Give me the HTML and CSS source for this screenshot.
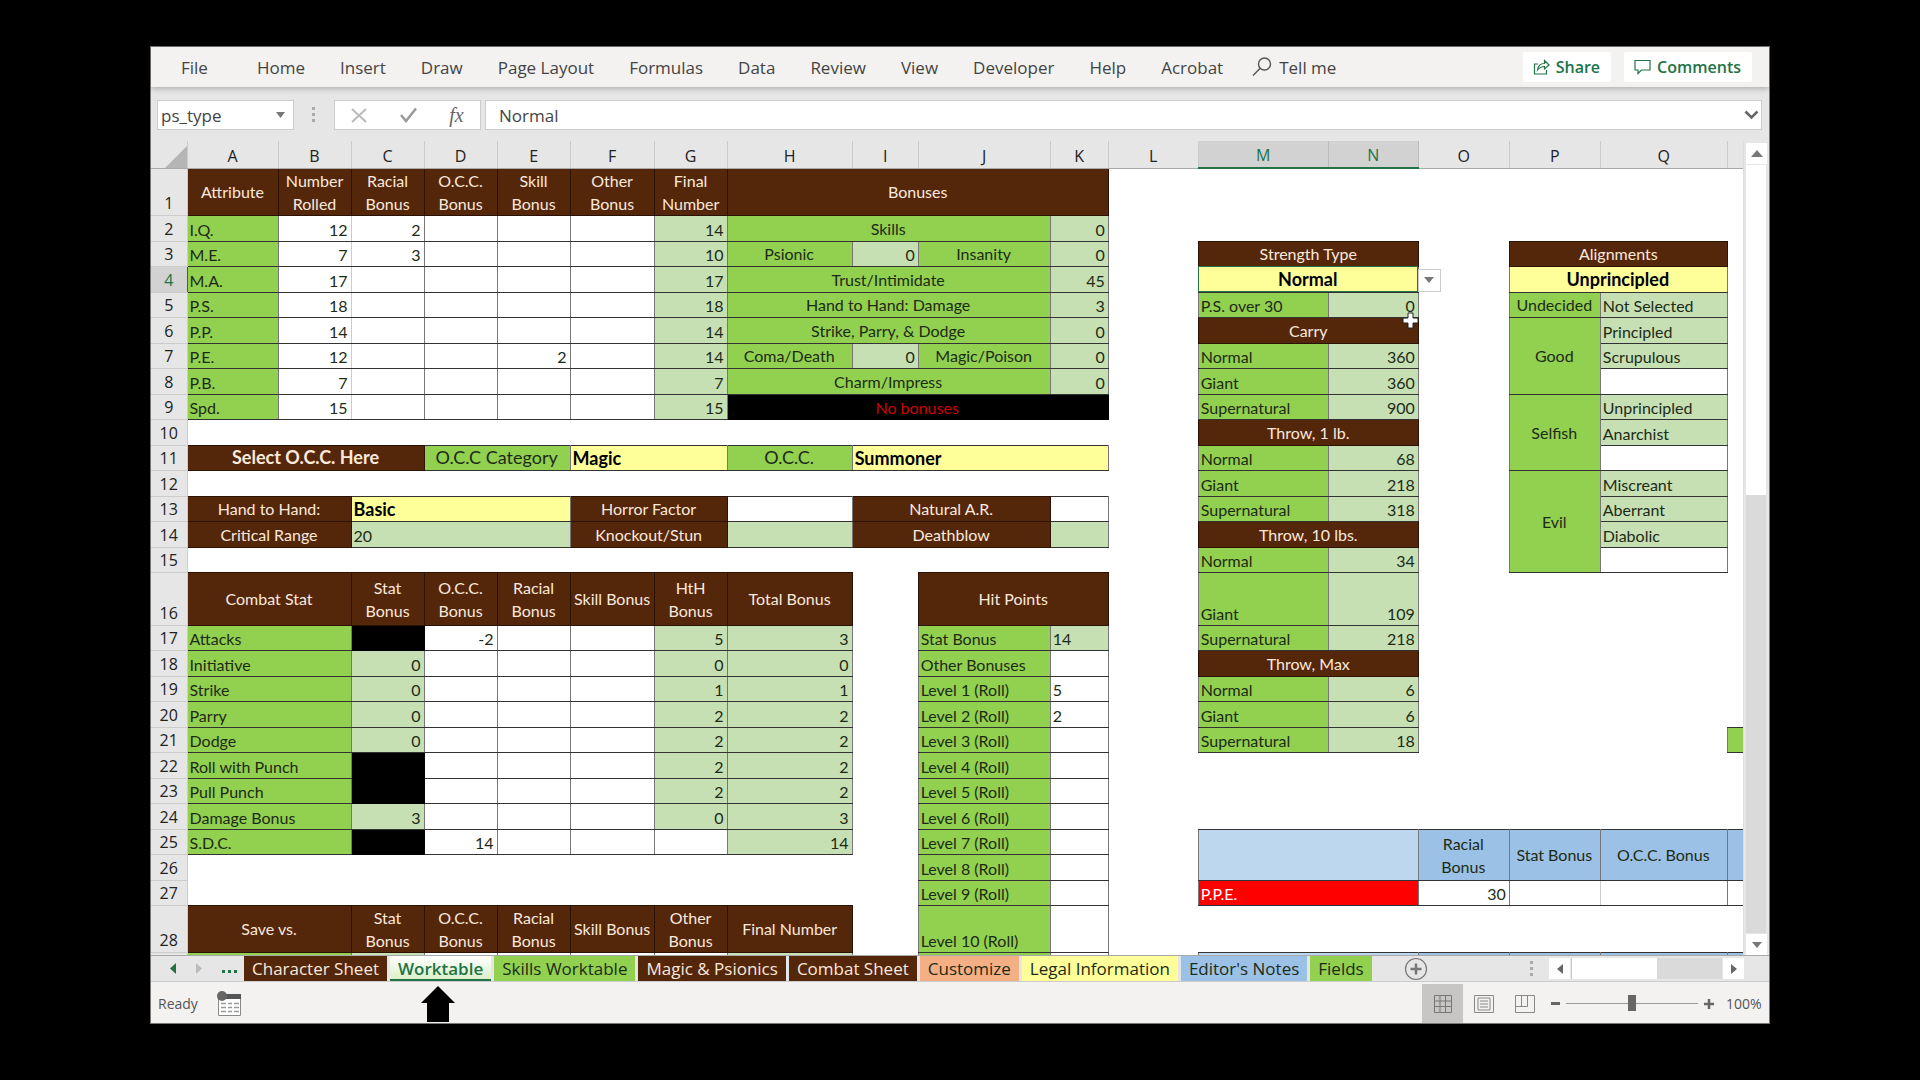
FILE: index.html
```html
<!DOCTYPE html>
<html lang="en">
<head>
    <meta charset="UTF-8">
    <meta name="viewport" content="width=device-width, initial-scale=1.0">
    <title>Worktable</title>
    <link rel="stylesheet" href="styles.css">
</head>
<body>
    <div class="window">
        <!-- Ribbon -->
        <nav class="ribbon">
            <button class="file-tab">File</button>
            <button>Home</button>
            <button>Insert</button>
            <button>Draw</button>
            <button>Page Layout</button>
            <button>Formulas</button>
            <button>Data</button>
            <button>Review</button>
            <button>View</button>
            <button>Developer</button>
            <button>Help</button>
            <button>Acrobat</button>
            <button class="tell-me">
                <svg width="20" height="20" viewBox="0 0 20 20" fill="none" stroke="#555" stroke-width="1.4"><circle cx="12.5" cy="7" r="6"/><path d="M8.2 11.3L1 18.5"/></svg>
                Tell me
            </button>
            <div class="ribbon-right">
                <button class="action">
                    <svg width="17" height="16" viewBox="0 0 17 16" fill="none" stroke="#217346" stroke-width="1.2"><path d="M5 5H1.5v10h12v-4M4.500 11c.5-4 3-6.500 7-6.500V1.500L16 6l-4.500 4V7.500c-3 0-5 1-7 3.500z"/></svg>
                    Share
                </button>
                <button class="action">
                    <svg width="17" height="16" viewBox="0 0 17 16" fill="none" stroke="#217346" stroke-width="1.2"><path d="M1 1.500h15v9.500H7.500L4 14.500V11H1z"/></svg>
                    Comments
                </button>
            </div>
        </nav>

        <!-- Formula bar -->
        <div class="formula-bar">
            <div class="name-box">
                <input type="text" value="ps_type" aria-label="Name box">
                <button aria-label="Show names"><svg width="9" height="6" viewBox="0 0 9 6"><path d="M0 0h9L4.500 6z" fill="#777"/></svg></button>
            </div>
            <svg class="grip" width="4" height="16" viewBox="0 0 4 16" fill="#aaa"><path d="M0 0h3v3H0zM0 6h3v3H0zM0 12h3v3H0z"/></svg>
            <div class="formula-buttons">
                <button aria-label="Cancel"><svg width="16" height="16" viewBox="0 0 16 16" stroke="#bbb" stroke-width="2"><path d="M1 2l14 13M15 2L1 15"/></svg></button>
                <button aria-label="Enter"><svg width="17" height="16" viewBox="0 0 17 16" fill="none" stroke="#999" stroke-width="2.500"><path d="M1 8l5 6L16 1.500"/></svg></button>
                <button class="fx" aria-label="Insert function">fx</button>
            </div>
            <div class="formula-input">
                <input type="text" value="Normal" aria-label="Formula">
                <button aria-label="Expand formula bar"><svg width="15" height="10" viewBox="0 0 15 10" fill="none" stroke="#666" stroke-width="2.500"><path d="M1.500 1.500l6 6 6-6"/></svg></button>
            </div>
        </div>

        <!-- Grid -->
        <div class="sheet-area">
            <div class="sheet-view">
                <table class="sheet">
                    <colgroup>
                        <col class="w-head"><col class="w-a"><col class="w-b"><col class="w-b"><col class="w-b"><col class="w-b">
                        <col class="w-f"><col class="w-b"><col class="w-h"><col class="w-i"><col class="w-j"><col class="w-k">
                        <col class="w-n"><col class="w-m"><col class="w-n"><col class="w-a"><col class="w-a"><col class="w-q"><col class="w-a">
                    </colgroup>
                    <thead>
                        <tr>
                            <th class="corner"><svg width="22" height="22" viewBox="0 0 22 22"><path d="M22 0v22H0z" fill="#b5b5b5"/></svg></th>
                            <th>A</th><th>B</th><th>C</th><th>D</th><th>E</th><th>F</th><th>G</th><th>H</th><th>I</th><th>J</th><th>K</th><th>L</th>
                            <th class="selected">M</th><th class="selected">N</th><th>O</th><th>P</th><th>Q</th><th></th>
                        </tr>
                    </thead>
                    <tbody>
                        <tr class="tall">
                            <th>1</th>
                            <td class="brown">Attribute</td><td class="brown">Number<br>Rolled</td><td class="brown">Racial<br>Bonus</td><td class="brown">O.C.C.<br>Bonus</td><td class="brown">Skill<br>Bonus</td><td class="brown">Other<br>Bonus</td><td class="brown">Final<br>Number</td>
                            <td class="brown" colspan="4">Bonuses</td>
                            <td colspan="7"></td>
                        </tr>
                        <tr>
                            <th>2</th>
                            <td class="green">I.Q.</td><td class="cell num soft">12</td><td class="cell num">2</td><td class="cell"></td><td class="cell"></td><td class="cell"></td><td class="light num">14</td>
                            <td class="green mid" colspan="3">Skills</td><td class="light num">0</td>
                            <td colspan="7"></td>
                        </tr>
                        <tr>
                            <th>3</th>
                            <td class="green">M.E.</td><td class="cell num soft">7</td><td class="cell num">3</td><td class="cell"></td><td class="cell"></td><td class="cell"></td><td class="light num">10</td>
                            <td class="green mid">Psionic</td><td class="light num">0</td><td class="green mid">Insanity</td><td class="light num">0</td>
                            <td></td>
                            <td class="brown" colspan="2">Strength Type</td>
                            <td></td>
                            <td class="brown" colspan="2">Alignments</td>
                            <td></td>
                        </tr>
                        <tr>
                            <th class="selected">4</th>
                            <td class="green">M.A.</td><td class="cell num soft">17</td><td class="cell"></td><td class="cell"></td><td class="cell"></td><td class="cell"></td><td class="light num">17</td>
                            <td class="green mid" colspan="3">Trust/Intimidate</td><td class="light num">45</td>
                            <td></td>
                            <td class="yellow mid active" colspan="2">Normal
                                <button class="cell-drop" aria-label="Choose strength type"><svg width="10" height="6" viewBox="0 0 10 6"><path d="M0 0h10L5 6z" fill="#777"/></svg></button>
                            </td>
                            <td></td>
                            <td class="yellow mid" colspan="2">Unprincipled</td>
                            <td></td>
                        </tr>
                        <tr>
                            <th>5</th>
                            <td class="green">P.S.</td><td class="cell num soft">18</td><td class="cell"></td><td class="cell"></td><td class="cell"></td><td class="cell"></td><td class="light num">18</td>
                            <td class="green mid" colspan="3">Hand to Hand: Damage</td><td class="light num">3</td>
                            <td></td>
                            <td class="green">P.S. over 30</td>
                            <td class="light num has-cursor">0
                                <svg class="cursor" width="17" height="17" viewBox="0 0 17 17" fill="#fff" stroke="#222"><path d="M6 1h5v5h5v5h-5v5H6v-5H1V6h5z"/></svg>
                            </td>
                            <td></td>
                            <td class="green mid">Undecided</td><td class="light">Not Selected</td>
                            <td></td>
                        </tr>
                        <tr>
                            <th>6</th>
                            <td class="green">P.P.</td><td class="cell num soft">14</td><td class="cell"></td><td class="cell"></td><td class="cell"></td><td class="cell"></td><td class="light num">14</td>
                            <td class="green mid" colspan="3">Strike, Parry, &amp; Dodge</td><td class="light num">0</td>
                            <td></td>
                            <td class="brown" colspan="2">Carry</td>
                            <td></td>
                            <td class="green mid" rowspan="3">Good</td><td class="light">Principled</td>
                            <td></td>
                        </tr>
                        <tr>
                            <th>7</th>
                            <td class="green">P.E.</td><td class="cell num soft">12</td><td class="cell"></td><td class="cell"></td><td class="cell num">2</td><td class="cell"></td><td class="light num">14</td>
                            <td class="green mid">Coma/Death</td><td class="light num">0</td><td class="green mid">Magic/Poison</td><td class="light num">0</td>
                            <td></td>
                            <td class="green">Normal</td><td class="light num">360</td>
                            <td></td>
                            <td class="light">Scrupulous</td>
                            <td></td>
                        </tr>
                        <tr>
                            <th>8</th>
                            <td class="green">P.B.</td><td class="cell num soft">7</td><td class="cell"></td><td class="cell"></td><td class="cell"></td><td class="cell"></td><td class="light num">7</td>
                            <td class="green mid" colspan="3">Charm/Impress</td><td class="light num">0</td>
                            <td></td>
                            <td class="green">Giant</td><td class="light num">360</td>
                            <td></td>
                            <td class="cell"></td>
                            <td></td>
                        </tr>
                        <tr>
                            <th>9</th>
                            <td class="green">Spd.</td><td class="cell num soft">15</td><td class="cell"></td><td class="cell"></td><td class="cell"></td><td class="cell"></td><td class="light num">15</td>
                            <td class="black warning" colspan="4">No bonuses</td>
                            <td></td>
                            <td class="green">Supernatural</td><td class="light num">900</td>
                            <td></td>
                            <td class="green mid" rowspan="3">Selfish</td><td class="light">Unprincipled</td>
                            <td></td>
                        </tr>
                        <tr>
                            <th>10</th>
                            <td colspan="12"></td>
                            <td class="brown" colspan="2">Throw, 1 lb.</td>
                            <td></td>
                            <td class="light">Anarchist</td>
                            <td></td>
                        </tr>
                        <tr>
                            <th>11</th>
                            <td class="brown big" colspan="3"><b>Select O.C.C. Here</b></td>
                            <td class="green mid big" colspan="2">O.C.C Category</td>
                            <td class="yellow" colspan="2">Magic</td>
                            <td class="green mid big">O.C.C.</td>
                            <td class="yellow" colspan="3">Summoner</td>
                            <td></td>
                            <td class="green">Normal</td><td class="light num">68</td>
                            <td></td>
                            <td class="cell"></td>
                            <td></td>
                        </tr>
                        <tr>
                            <th>12</th>
                            <td colspan="12"></td>
                            <td class="green">Giant</td><td class="light num">218</td>
                            <td></td>
                            <td class="green mid" rowspan="4">Evil</td><td class="light">Miscreant</td>
                            <td></td>
                        </tr>
                        <tr>
                            <th>13</th>
                            <td class="brown" colspan="2">Hand to Hand:</td>
                            <td class="yellow" colspan="3">Basic</td>
                            <td class="brown" colspan="2">Horror Factor</td>
                            <td class="cell"></td>
                            <td class="brown" colspan="2">Natural A.R.</td>
                            <td class="cell"></td>
                            <td></td>
                            <td class="green">Supernatural</td><td class="light num">318</td>
                            <td></td>
                            <td class="light">Aberrant</td>
                            <td></td>
                        </tr>
                        <tr>
                            <th>14</th>
                            <td class="brown" colspan="2">Critical Range</td>
                            <td class="light" colspan="3">20</td>
                            <td class="brown" colspan="2">Knockout/Stun</td>
                            <td class="light"></td>
                            <td class="brown" colspan="2">Deathblow</td>
                            <td class="light"></td>
                            <td></td>
                            <td class="brown" colspan="2">Throw, 10 lbs.</td>
                            <td></td>
                            <td class="light">Diabolic</td>
                            <td></td>
                        </tr>
                        <tr>
                            <th>15</th>
                            <td colspan="12"></td>
                            <td class="green">Normal</td><td class="light num">34</td>
                            <td></td>
                            <td class="cell"></td>
                            <td></td>
                        </tr>
                        <tr class="taller">
                            <th>16</th>
                            <td class="brown" colspan="2">Combat Stat</td><td class="brown">Stat<br>Bonus</td><td class="brown">O.C.C.<br>Bonus</td><td class="brown">Racial<br>Bonus</td><td class="brown">Skill Bonus</td><td class="brown">HtH<br>Bonus</td><td class="brown">Total Bonus</td>
                            <td></td>
                            <td class="brown" colspan="2">Hit Points</td>
                            <td></td>
                            <td class="green">Giant</td><td class="light num">109</td>
                            <td colspan="4"></td>
                        </tr>
                        <tr>
                            <th>17</th>
                            <td class="green" colspan="2">Attacks</td><td class="black"></td><td class="cell num">-2</td><td class="cell"></td><td class="cell"></td><td class="light num">5</td><td class="light num">3</td>
                            <td></td>
                            <td class="green">Stat Bonus</td><td class="light">14</td>
                            <td></td>
                            <td class="green">Supernatural</td><td class="light num">218</td>
                            <td colspan="4"></td>
                        </tr>
                        <tr>
                            <th>18</th>
                            <td class="green" colspan="2">Initiative</td><td class="light num">0</td><td class="cell"></td><td class="cell"></td><td class="cell"></td><td class="light num">0</td><td class="light num">0</td>
                            <td></td>
                            <td class="green">Other Bonuses</td><td class="cell"></td>
                            <td></td>
                            <td class="brown" colspan="2">Throw, Max</td>
                            <td colspan="4"></td>
                        </tr>
                        <tr>
                            <th>19</th>
                            <td class="green" colspan="2">Strike</td><td class="light num">0</td><td class="cell"></td><td class="cell"></td><td class="cell"></td><td class="light num">1</td><td class="light num">1</td>
                            <td></td>
                            <td class="green">Level 1 (Roll)</td><td class="cell">5</td>
                            <td></td>
                            <td class="green">Normal</td><td class="light num">6</td>
                            <td colspan="4"></td>
                        </tr>
                        <tr>
                            <th>20</th>
                            <td class="green" colspan="2">Parry</td><td class="light num">0</td><td class="cell"></td><td class="cell"></td><td class="cell"></td><td class="light num">2</td><td class="light num">2</td>
                            <td></td>
                            <td class="green">Level 2 (Roll)</td><td class="cell">2</td>
                            <td></td>
                            <td class="green">Giant</td><td class="light num">6</td>
                            <td colspan="4"></td>
                        </tr>
                        <tr>
                            <th>21</th>
                            <td class="green" colspan="2">Dodge</td><td class="light num">0</td><td class="cell"></td><td class="cell"></td><td class="cell"></td><td class="light num">2</td><td class="light num">2</td>
                            <td></td>
                            <td class="green">Level 3 (Roll)</td><td class="cell"></td>
                            <td></td>
                            <td class="green">Supernatural</td><td class="light num">18</td>
                            <td colspan="3"></td>
                            <td class="green"></td>
                        </tr>
                        <tr>
                            <th>22</th>
                            <td class="green" colspan="2">Roll with Punch</td><td class="black"></td><td class="cell"></td><td class="cell"></td><td class="cell"></td><td class="light num">2</td><td class="light num">2</td>
                            <td></td>
                            <td class="green">Level 4 (Roll)</td><td class="cell"></td>
                            <td colspan="7"></td>
                        </tr>
                        <tr>
                            <th>23</th>
                            <td class="green" colspan="2">Pull Punch</td><td class="black"></td><td class="cell"></td><td class="cell"></td><td class="cell"></td><td class="light num">2</td><td class="light num">2</td>
                            <td></td>
                            <td class="green">Level 5 (Roll)</td><td class="cell"></td>
                            <td colspan="7"></td>
                        </tr>
                        <tr>
                            <th>24</th>
                            <td class="green" colspan="2">Damage Bonus</td><td class="light num">3</td><td class="cell"></td><td class="cell"></td><td class="cell"></td><td class="light num">0</td><td class="light num">3</td>
                            <td></td>
                            <td class="green">Level 6 (Roll)</td><td class="cell"></td>
                            <td colspan="7"></td>
                        </tr>
                        <tr>
                            <th>25</th>
                            <td class="green" colspan="2">S.D.C.</td><td class="black"></td><td class="cell num">14</td><td class="cell"></td><td class="cell"></td><td class="cell"></td><td class="light num">14</td>
                            <td></td>
                            <td class="green">Level 7 (Roll)</td><td class="cell"></td>
                            <td></td>
                            <td class="pale-blue" colspan="2" rowspan="2"></td><td class="blue" rowspan="2">Racial<br>Bonus</td><td class="blue" rowspan="2">Stat Bonus</td><td class="blue" rowspan="2">O.C.C. Bonus</td><td class="blue" rowspan="2"></td>
                        </tr>
                        <tr>
                            <th>26</th>
                            <td colspan="9"></td>
                            <td class="green">Level 8 (Roll)</td><td class="cell"></td>
                            <td></td>
                        </tr>
                        <tr>
                            <th>27</th>
                            <td colspan="9"></td>
                            <td class="green">Level 9 (Roll)</td><td class="cell"></td>
                            <td></td>
                            <td class="red" colspan="2">P.P.E.</td><td class="cell num">30</td><td class="cell soft"></td><td class="cell"></td><td class="cell"></td>
                        </tr>
                        <tr class="tall">
                            <th>28</th>
                            <td class="brown" colspan="2">Save vs.</td><td class="brown">Stat<br>Bonus</td><td class="brown">O.C.C.<br>Bonus</td><td class="brown">Racial<br>Bonus</td><td class="brown">Skill Bonus</td><td class="brown">Other<br>Bonus</td><td class="brown">Final Number</td>
                            <td></td>
                            <td class="green">Level 10 (Roll)</td><td class="cell"></td>
                            <td colspan="7"></td>
                        </tr>
                        <tr>
                            <th></th>
                            <td class="green" colspan="2"></td><td class="light"></td><td class="cell"></td><td class="cell"></td><td class="cell"></td><td class="cell"></td><td class="light"></td>
                            <td></td>
                            <td class="green"></td><td class="cell"></td>
                            <td></td>
                            <td class="pale-blue" colspan="2"></td><td class="blue"></td><td class="blue"></td><td class="blue"></td><td class="blue"></td>
                        </tr>
                    </tbody>
                </table>
            </div>
            <div class="scroll-v">
                <button aria-label="Scroll up"><svg width="12" height="7" viewBox="0 0 12 7"><path d="M0 7h12L6 0z" fill="#777"/></svg></button>
                <div class="track"><div class="thumb"></div></div>
                <button aria-label="Scroll down"><svg width="10" height="6" viewBox="0 0 10 6"><path d="M0 0h10L5 6z" fill="#777"/></svg></button>
            </div>
        </div>

        <!-- Sheet tabs -->
        <div class="tab-bar">
            <div class="tab-nav">
                <button aria-label="Previous sheet"><svg width="6" height="11" viewBox="0 0 6 11"><path d="M6 0v11L0 5.500z" fill="#217346"/></svg></button>
                <button aria-label="Next sheet"><svg width="6" height="11" viewBox="0 0 6 11"><path d="M0 0v11l6-5.500z" fill="#bbb"/></svg></button>
                <button class="more" aria-label="More sheets"><svg width="16" height="4" viewBox="0 0 16 4" fill="#217346"><path d="M0 0h3v3H0zM6 0h3v3H6zM12 0h3v3h-3z"/></svg></button>
            </div>
            <div class="tabs">
                <button class="tab tab-brown">Character Sheet</button>
                <button class="tab tab-active">Worktable
                    <svg class="pointer" width="34" height="36" viewBox="0 0 34 36"><path d="M17 0l17 17h-6v19H6V17H0z"/></svg>
                </button>
                <button class="tab tab-green">Skills Worktable</button>
                <button class="tab tab-brown">Magic &amp; Psionics</button>
                <button class="tab tab-brown">Combat Sheet</button>
                <button class="tab tab-orange">Customize</button>
                <button class="tab tab-yellow">Legal Information</button>
                <button class="tab tab-blue">Editor's Notes</button>
                <button class="tab tab-green">Fields</button>
            </div>
            <button class="add-sheet" aria-label="New sheet"><svg width="24" height="24" viewBox="0 0 24 24" fill="none" stroke="#777"><circle cx="12" cy="12" r="10.500" stroke-width="1.200"/><path d="M12 6.500v11M6.500 12h11" stroke-width="2.500"/></svg></button>
            <svg class="tab-grip" width="4" height="16" viewBox="0 0 4 16" fill="#aaa"><path d="M0 0h3v3H0zM0 6h3v3H0zM0 12h3v3H0z"/></svg>
            <div class="scroll-h">
                <button aria-label="Scroll left"><svg width="6" height="10" viewBox="0 0 6 10"><path d="M6 0v10L0 5z" fill="#666"/></svg></button>
                <div class="track"><div class="thumb"></div></div>
                <button aria-label="Scroll right"><svg width="6" height="10" viewBox="0 0 6 10"><path d="M0 0v10l6-5z" fill="#666"/></svg></button>
            </div>
        </div>

        <!-- Status bar -->
        <footer class="status-bar">
            <span class="ready">Ready</span>
            <svg width="26" height="26" viewBox="0 0 26 26"><path d="M2.500 6v18.500h22V4" fill="#fff" stroke="#888"/><path d="M9 3h16v5H9z" fill="#555"/><circle cx="6" cy="5" r="5" fill="#666"/><path d="M5 12.500h5m2 0h4m2 0h5M5 16.500h5m2 0h4m2 0h5M5 20.500h5m2 0h4m2 0h5" stroke="#999" stroke-width="1.500"/></svg>
            <div class="views">
                <button class="on" aria-label="Normal view"><svg width="18" height="18" viewBox="0 0 18 18" fill="none" stroke="#777"><path d="M.5.5h17v17H.5zM.5 6h17M.5 11.500h17M6 .5v17M11.500.5v17"/></svg></button>
                <button aria-label="Page layout view"><svg width="20" height="18" viewBox="0 0 20 18" fill="none" stroke="#888"><path d="M.5.5h19v17H.5zM4 3h12v12H4zM6 6h8M6 9h8M6 12h8"/></svg></button>
                <button aria-label="Page break view"><svg width="20" height="18" viewBox="0 0 20 18" fill="none" stroke="#888"><path d="M.5.5h19v17H.5zM.5 11.500h12V.5M6.500.5v11"/></svg></button>
            </div>
            <div class="zoom">
                <button aria-label="Zoom out"><svg width="9" height="9" viewBox="0 0 9 9"><path d="M0 3h9v3H0z" fill="#666"/></svg></button>
                <input type="range" min="0" max="200" value="100" aria-label="Zoom">
                <button aria-label="Zoom in"><svg width="10" height="10" viewBox="0 0 10 10" stroke="#666" stroke-width="2.500"><path d="M0 5h10M5 0v10"/></svg></button>
                <span>100%</span>
            </div>
        </footer>
    </div>
</body>
</html>
```

FILE: styles.css
```css
*, *:before, *:after {
    box-sizing: border-box;
}
body {
    margin: 0;
    padding: 46px 150px 56px;
    height: 100vh;
    background: #000;
    font-family: "Open Sans", "Noto Sans", sans-serif;
    color: #444;
    display: flex;
}
button, input {
    font: inherit;
    color: inherit;
    background: none;
    border: 0;
    padding: 0;
    margin: 0;
}
button {
    display: flex;
    align-items: center;
    justify-content: center;
    white-space: nowrap;
}
svg {
    flex: none;
}

.window {
    flex: 1;
    min-width: 0;
    display: flex;
    flex-direction: column;
    background: #e6e6e6;
    border: 1px solid #777;
}

/* Ribbon */
.ribbon {
    display: flex;
    align-items: center;
    gap: 35px;
    height: 40px;
    padding: 0 17px 0 30px;
    background: #f3f2f1;
    box-shadow: 0 1px 6px rgba(0, 0, 0, 0.3);
    font-size: 17px;
    flex: none;
    z-index: 1;
}
.file-tab {
    margin-right: 14px;
}
.tell-me {
    gap: 7px;
    margin-left: -6px;
}
.ribbon-right {
    margin-left: auto;
    display: flex;
    gap: 13px;
}
.action {
    gap: 6px;
    height: 30px;
    padding: 0 11px 0 10px;
    background: #fff;
    border-radius: 2px;
    color: #217346;
    font-size: 16px;
    font-weight: 600;
}

/* Formula bar */
.formula-bar {
    display: flex;
    align-items: center;
    height: 54px;
    padding: 2px 7px 0 6px;
    font-size: 17px;
    flex: none;
}
.name-box, .formula-buttons, .formula-input {
    display: flex;
    align-items: center;
    height: 30px;
    background: #fff;
    border: 1px solid #ccc;
}
.name-box {
    width: 137px;
    padding: 0 8px 0 3px;
}
.name-box input, .formula-input input {
    flex: 1;
    min-width: 0;
}
.grip {
    margin: 0 18px;
}
.formula-buttons {
    width: 147px;
    justify-content: space-around;
    margin-right: 4px;
}
.fx {
    font-family: "Liberation Serif", serif;
    font-style: italic;
    font-size: 20px;
    color: #666;
}
.formula-input {
    flex: 1;
    padding: 0 2px 0 13px;
}

/* Grid */
.sheet-area {
    flex: 1;
    min-height: 0;
    display: flex;
}
.sheet-view {
    flex: 1;
    min-width: 0;
    overflow: hidden;
    background: #fff;
}
.sheet {
    width: 1668px;
    table-layout: fixed;
    border-collapse: collapse;
    font-family: Lato, sans-serif;
    font-size: 16px;
    line-height: 23px;
    color: #1d2b16;
}
.w-head { width: 36px; }
.w-a { width: 91px; }
.w-b { width: 73px; }
.w-f { width: 84px; }
.w-h { width: 125px; }
.w-i { width: 66px; }
.w-j { width: 132px; }
.w-k { width: 58px; }
.w-m { width: 130px; }
.w-n { width: 90px; }
.w-q { width: 127px; }

.sheet tr { height: 25px; }
.sheet tr:nth-child(even) { height: 26px; }
.sheet thead tr { height: 27px; }
.sheet tr.tall { height: 47px; }
.sheet tr.taller { height: 53px; }

.sheet th {
    padding: 0;
    background: #e6e6e6;
    border: 1px solid #ccc;
    border-left: 0;
    font-family: "Open Sans", "Noto Sans", sans-serif;
    font-size: 16px;
    font-weight: normal;
    color: #222;
    vertical-align: bottom;
}
.sheet thead th {
    border-top: 0;
    border-bottom-color: #aaa;
}
.sheet th.selected {
    background: #d2d2d2;
    color: #217346;
    border-right-color: #217346;
}
.sheet thead th.selected {
    border-right-color: #bbb;
    border-bottom: 2px solid #217346;
}
.sheet .corner {
    text-align: right;
    line-height: 0;
}
.sheet td {
    padding: 0 3px 0 2px;
    vertical-align: bottom;
    white-space: nowrap;
}
.cell, .green, .light, .yellow, .brown, .black, .blue, .pale-blue, .red {
    border: 1px solid #333;
    border-left-color: #777;
    border-right-color: #777;
}
.green { background: #92d050; }
.light { background: #c6e0b4; }
.yellow {
    background: #ffff99;
    color: #000;
    font-size: 18px;
    font-weight: bold;
}
.sheet .brown {
    background: #54260a;
    border-color: #2b1204;
    color: #fbe9dc;
    text-align: center;
    vertical-align: middle;
    padding: 0;
}
.black {
    background: #000;
    border-color: #000;
}
.warning {
    color: #d00000;
    text-align: center;
}
.sheet .blue {
    background: #9bc2e6;
    text-align: center;
    vertical-align: middle;
}
.pale-blue { background: #bdd7ee; }
.red {
    background: #f00;
    color: #fff;
}
.num { text-align: right; }
.soft { border-right-color: #ccc; }
.sheet .mid {
    text-align: center;
    vertical-align: middle;
}
.big { font-size: 18px; }

.active {
    position: relative;
    outline: 1px solid #217346;
    outline-offset: -1px;
}
.cell-drop {
    position: absolute;
    left: 100%;
    top: 2px;
    width: 23px;
    height: 23px;
    background: #fff;
    border: 1px solid #ccc;
}
.has-cursor { position: relative; }
.cursor {
    position: absolute;
    right: -1px;
    bottom: -12px;
    z-index: 2;
}

/* Scroll bars */
.scroll-v {
    width: 26px;
    padding: 2px 3px 0 2px;
    display: flex;
    flex-direction: column;
    border-left: 1px solid #ddd;
}
.scroll-v button, .scroll-h button {
    width: 21px;
    height: 21px;
    background: #fff;
    flex: none;
}
.scroll-v .track {
    flex: 1;
    margin: 1px 0;
    background: #dadada;
}
.scroll-v .thumb {
    height: 43%;
    background: #fff;
}

/* Sheet tabs */
.tab-bar {
    display: flex;
    align-items: center;
    height: 27px;
    padding-right: 25px;
    border-top: 1px solid #aaa;
    border-bottom: 1px solid #ccc;
    flex: none;
}
.tab-nav {
    display: flex;
    align-items: center;
    width: 93px;
    padding-left: 19px;
    gap: 20px;
}
.tab-nav .more {
    padding-top: 7px;
}
.tabs {
    display: flex;
    gap: 3px;
    height: 25px;
}
.tab {
    position: relative;
    padding: 0 8px;
    font-size: 17px;
    color: #1d2b16;
}
.tab-brown {
    background: #54260a;
    color: #fbe9dc;
}
.tab-green { background: #92d050; }
.tab-orange { background: #f4b084; }
.tab-yellow { background: #ffff99; }
.tab-blue { background: #9bc2e6; }
.tab-active {
    background: linear-gradient(#fff, #d8efc4);
    box-shadow: inset 0 -2px #217346;
    color: #217346;
    font-weight: 600;
}
.pointer {
    position: absolute;
    left: 31px;
    top: 30px;
    z-index: 2;
}
.add-sheet {
    margin-left: 32px;
}
.tab-grip {
    margin-left: auto;
}
.scroll-h {
    display: flex;
    width: 195px;
    margin-left: 15px;
}
.scroll-h .track {
    flex: 1;
    margin: 0 1px;
    background: #dadada;
}
.scroll-h .thumb {
    width: 57%;
    height: 100%;
    background: #fff;
    border-left: 1px solid #ccc;
}

/* Status bar */
.status-bar {
    display: flex;
    align-items: center;
    height: 41px;
    padding: 2px 7px 0;
    background: #f3f2f1;
    font-size: 14px;
    color: #555;
    flex: none;
}
.ready {
    width: 58px;
}
.views {
    display: flex;
    align-self: stretch;
    margin-left: auto;
}
.views button {
    width: 41px;
}
.views .on {
    background: #c8c6c4;
}
.zoom {
    display: flex;
    align-items: center;
    gap: 6px;
    margin-left: 6px;
}
.zoom span {
    margin-left: 6px;
    width: 36px;
}
.zoom input {
    appearance: none;
    width: 132px;
    height: 16px;
}
.zoom input::-webkit-slider-runnable-track {
    height: 1px;
    background: #999;
}
.zoom input::-webkit-slider-thumb {
    appearance: none;
    width: 8px;
    height: 16px;
    margin-top: -8px;
    background: #666;
}
```
